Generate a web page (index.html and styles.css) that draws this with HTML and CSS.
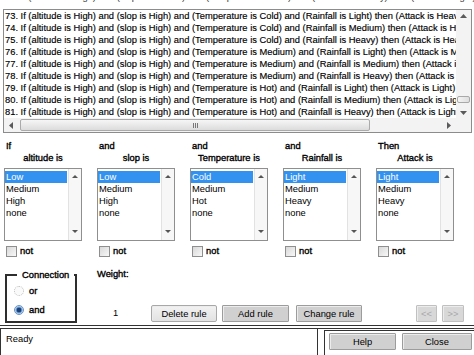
FILE: index.html
```html
<!DOCTYPE html>
<html>
<head>
<meta charset="utf-8">
<link rel="stylesheet" href="styles.css">
</head>
<body>
<div class="ghost"><div class="ghost-line">72. If (altitude is High) and (slop is Medium) and (Temperature is Hot) and (Rainfall is Heavy) then (Attack is Light) (1)</div></div>
<div class="rules">
  <div class="lines">
    <div>73. If (altitude is High) and (slop is High) and (Temperature is Cold) and (Rainfall is Light) then (Attack is Heavy) (1)</div>
    <div>74. If (altitude is High) and (slop is High) and (Temperature is Cold) and (Rainfall is Medium) then (Attack is Heavy) (1)</div>
    <div>75. If (altitude is High) and (slop is High) and (Temperature is Cold) and (Rainfall is Heavy) then (Attack is Heavy) (1)</div>
    <div>76. If (altitude is High) and (slop is High) and (Temperature is Medium) and (Rainfall is Light) then (Attack is Medium) (1)</div>
    <div>77. If (altitude is High) and (slop is High) and (Temperature is Medium) and (Rainfall is Medium) then (Attack is Medium) (1)</div>
    <div>78. If (altitude is High) and (slop is High) and (Temperature is Medium) and (Rainfall is Heavy) then (Attack is Medium) (1)</div>
    <div>79. If (altitude is High) and (slop is High) and (Temperature is Hot) and (Rainfall is Light) then (Attack is Light) (1)</div>
    <div>80. If (altitude is High) and (slop is High) and (Temperature is Hot) and (Rainfall is Medium) then (Attack is Light) (1)</div>
    <div>81. If (altitude is High) and (slop is High) and (Temperature is Hot) and (Rainfall is Heavy) then (Attack is Light) (1)</div>
  </div>
  <div class="vscroll">
    <div class="arrow"><svg width="7" height="4" viewBox="0 0 7 4"><path d="M0 4 L3.5 0 L7 4z" fill="#5a5a5a"/></svg></div>
    <div class="vspace"></div>
    <div class="vthumb"></div>
    <div class="arrow"><svg width="7" height="4" viewBox="0 0 7 4"><path d="M0 0 L3.5 4 L7 0z" fill="#5a5a5a"/></svg></div>
  </div>
  <div class="hscroll">
    <div class="harrow"><svg width="4" height="7" viewBox="0 0 4 7"><path d="M4 0 L0 3.5 L4 7z" fill="#5a5a5a"/></svg></div>
    <div class="hthumb"><span class="grip"></span><span class="grip"></span><span class="grip"></span></div>
    <div class="htrack"></div>
    <div class="harrow"><svg width="4" height="7" viewBox="0 0 4 7"><path d="M0 0 L4 3.5 L0 7z" fill="#5a5a5a"/></svg></div>
  </div>
  <div class="corner"></div>
</div>

<div class="cols">
  <div class="col">
    <div class="op">If</div>
    <div class="field">altitude is</div>
    <div class="listbox">
      <div class="items"><div class="item sel">Low</div><div class="item">Medium</div><div class="item">High</div><div class="item">none</div></div>
      <div class="lscroll"><svg width="6" height="3" viewBox="0 0 6 3"><path d="M0 3 L3 0 L6 3z" fill="#555"/></svg><svg width="6" height="3" viewBox="0 0 6 3"><path d="M0 0 L3 3 L6 0z" fill="#555"/></svg></div>
    </div>
    <div class="notrow"><span class="check"></span><span class="notlbl">not</span></div>
  </div>
  <div class="col">
    <div class="op">and</div>
    <div class="field">slop is</div>
    <div class="listbox">
      <div class="items"><div class="item sel">Low</div><div class="item">Medium</div><div class="item">High</div><div class="item">none</div></div>
      <div class="lscroll"><svg width="6" height="3" viewBox="0 0 6 3"><path d="M0 3 L3 0 L6 3z" fill="#555"/></svg><svg width="6" height="3" viewBox="0 0 6 3"><path d="M0 0 L3 3 L6 0z" fill="#555"/></svg></div>
    </div>
    <div class="notrow"><span class="check"></span><span class="notlbl">not</span></div>
  </div>
  <div class="col">
    <div class="op">and</div>
    <div class="field">Temperature is</div>
    <div class="listbox">
      <div class="items"><div class="item sel">Cold</div><div class="item">Medium</div><div class="item">Hot</div><div class="item">none</div></div>
      <div class="lscroll"><svg width="6" height="3" viewBox="0 0 6 3"><path d="M0 3 L3 0 L6 3z" fill="#555"/></svg><svg width="6" height="3" viewBox="0 0 6 3"><path d="M0 0 L3 3 L6 0z" fill="#555"/></svg></div>
    </div>
    <div class="notrow"><span class="check"></span><span class="notlbl">not</span></div>
  </div>
  <div class="col">
    <div class="op">and</div>
    <div class="field">Rainfall is</div>
    <div class="listbox">
      <div class="items"><div class="item sel">Light</div><div class="item">Medium</div><div class="item">Heavy</div><div class="item">none</div></div>
      <div class="lscroll"><svg width="6" height="3" viewBox="0 0 6 3"><path d="M0 3 L3 0 L6 3z" fill="#555"/></svg><svg width="6" height="3" viewBox="0 0 6 3"><path d="M0 0 L3 3 L6 0z" fill="#555"/></svg></div>
    </div>
    <div class="notrow"><span class="check"></span><span class="notlbl">not</span></div>
  </div>
  <div class="col">
    <div class="op">Then</div>
    <div class="field">Attack is</div>
    <div class="listbox">
      <div class="items"><div class="item sel">Light</div><div class="item">Medium</div><div class="item">Heavy</div><div class="item">none</div></div>
      <div class="lscroll"><svg width="6" height="3" viewBox="0 0 6 3"><path d="M0 3 L3 0 L6 3z" fill="#555"/></svg><svg width="6" height="3" viewBox="0 0 6 3"><path d="M0 0 L3 3 L6 0z" fill="#555"/></svg></div>
    </div>
    <div class="notrow"><span class="check"></span><span class="notlbl">not</span></div>
  </div>
</div>

<div class="bottom">
  <fieldset class="conn">
    <legend class="bold">Connection</legend>
    <div class="radio-row first"><span class="radio"></span><span class="bold">or</span></div>
    <div class="radio-row"><span class="radio on"></span><span class="bold">and</span></div>
  </fieldset>
  <div class="weight">
    <div class="bold">Weight:</div>
    <div class="wval">1</div>
  </div>
  <div class="actions">
    <button class="btn light w66">Delete rule</button>
    <button class="btn w67 gap5">Add rule</button>
    <button class="btn w66 gap7">Change rule</button>
    <button class="btn nav dis">&lt;&lt;</button>
    <button class="btn nav2 dis gap5">&gt;&gt;</button>
  </div>
</div>
<div class="sep"></div>
<div class="status">
  <div class="panel-left">Ready</div>
  <div class="panel-right">
    <button class="btn help">Help</button>
    <button class="btn close">Close</button>
  </div>
</div>
</body>
</html>
```
FILE: styles.css
```css
* { box-sizing: border-box; }
html, body { margin: 0; padding: 0; }
body {
  width: 474px;
  height: 355px;
  overflow: hidden;
  background: #fff;
  font-family: "Liberation Sans", Arial, sans-serif;
  font-size: 9.35px;
  line-height: 12px;
  color: #000;
}
.bold { -webkit-text-stroke: 0.35px #000; }

.ghost { height: 9px; overflow: hidden; padding-left: 5px; }
.ghost-line { margin-top: -9px; white-space: nowrap; color: #333; }

.rules {
  margin: 0 2px 0 3px;
  height: 124px;
  border: 1px solid #8c8c8c;
  display: grid;
  grid-template-columns: 1fr 15px;
  grid-template-rows: 1fr 14px;
}
.lines {
  overflow: hidden;
  white-space: nowrap;
  padding-left: 1px;
  -webkit-text-stroke: 0.15px #000;
}
.vscroll {
  display: flex;
  flex-direction: column;
  align-items: center;
  background: #f3f3f3;
}
.arrow { height: 11px; display: flex; align-items: center; justify-content: center; }
.vspace { flex: 1; }
.vthumb {
  width: 13px;
  height: 7px;
  margin-bottom: 4px;
  border: 1px solid #a9a9a9;
  border-radius: 2px;
  background: linear-gradient(90deg, #f4f4f4, #dedede);
}
.hscroll {
  display: flex;
  align-items: center;
  background: #f3f3f3;
}
.harrow { width: 14px; height: 14px; display: flex; align-items: center; justify-content: center; }
.hthumb {
  margin-left: 2px;
  width: 350px;
  height: 12px;
  border: 1px solid #aaaaaa;
  border-radius: 2px;
  background: linear-gradient(#f6f6f6, #dcdcdc);
  display: flex;
  justify-content: center;
  align-items: center;
  gap: 1px;
}
.grip { width: 1px; height: 5px; background: #777; }
.htrack { flex: 1; }
.corner { background: #f3f3f3; }

.cols {
  margin-top: 7px;
  padding-left: 4px;
  display: grid;
  grid-template-columns: repeat(5, 78px);
  column-gap: 15px;
}
.op { padding-left: 2px; height: 12px; -webkit-text-stroke: 0.35px #000; }
.field { text-align: center; height: 12px; -webkit-text-stroke: 0.35px #000; }
.listbox {
  margin-top: 4px;
  height: 73px;
  border: 1px solid #8f8f8f;
  display: flex;
}
.items { width: 62px; padding-top: 2px; }
.item { height: 12px; padding-left: 1px; }
.item.sel { background: #3392ef; color: #fff; }
.lscroll {
  margin-left: 1px;
  width: 13px;
  border-left: 1px solid #e2e2e2;
  background: #f7f7f7;
  display: flex;
  flex-direction: column;
  justify-content: space-between;
  align-items: center;
  padding: 6px 0 7px;
}
.notrow { margin-top: 4px; height: 12px; display: flex; align-items: center; padding-left: 2px; }
.check {
  width: 11px;
  height: 11px;
  border: 1px solid #8e8e8e;
  background: linear-gradient(135deg, #d8d8d8, #f8f8f8);
}
.notlbl { margin-left: 3px; -webkit-text-stroke: 0.35px #000; }

.bottom { display: flex; height: 68px; padding-left: 5px; }
.conn {
  margin: 12px 0 0 0;
  padding: 0 0 0 7px;
  width: 72px;
  height: 54px;
  min-width: 0;
  border: 2px solid #2e2e2e;
}
.conn legend { margin-left: 3px; padding: 0 5px; line-height: 12px; }
.radio-row { display: flex; align-items: center; height: 12px; margin-top: 7px; }
.radio-row.first { margin-top: 4px; }
.radio {
  width: 10px;
  height: 10px;
  border-radius: 50%;
  border: 1px dotted #bdbdbd;
  background: #fafafa;
  margin-right: 5px;
}
.radio.on {
  border: 1px solid #6a92c0;
  background: radial-gradient(circle, #1c3f73 0 2px, #4f86c6 2.5px, #cfe2f5 4px);
}
.weight { margin-left: 20px; width: 54px; padding-top: 11px; }
.wval { margin-top: 27px; padding-left: 16px; }
.actions { display: flex; margin-top: 48px; height: 17px; }
.btn {
  font-family: "Liberation Sans", Arial, sans-serif;
  font-size: 9.35px;
  line-height: 12px;
  color: #000;
  height: 17px;
  padding: 0;
  margin: 0;
  border: 1px solid #9c9c9c;
  border-radius: 1px;
  background: #d0d0d0;
  box-shadow: inset 1px 1px 0 #ececec;
}
.btn.light { background: linear-gradient(#f2f2f2, #e2e2e2); border-color: #a8a8a8; border-radius: 2px; }
.w66 { width: 66px; }
.w67 { width: 67px; }
.gap5 { margin-left: 5px; }
.gap7 { margin-left: 7px; }
.btn.nav { width: 21px; margin-left: 54px; }
.btn.nav2 { width: 22px; }
.btn.dis { color: #a8a8a8; background: #d8d8d8; border-color: #c0c0c0; }

.sep { height: 4px; border-top: 1px solid #333; border-bottom: 1px solid #333; }
.status { display: flex; height: 26px; }
.panel-left {
  width: 318px;
  border-left: 1px solid #333;
  border-right: 1px solid #333;
  padding: 4px 0 0 5px;
}
.panel-right {
  margin-left: 6px;
  margin-top: 1px;
  flex: 1;
  border-left: 1px solid #333;
  border-top: 1px solid #333;
  display: flex;
  padding: 2px 0 0 4px;
}
.btn.help { width: 67px; }
.btn.close { width: 70px; margin-left: 6px; }
```
